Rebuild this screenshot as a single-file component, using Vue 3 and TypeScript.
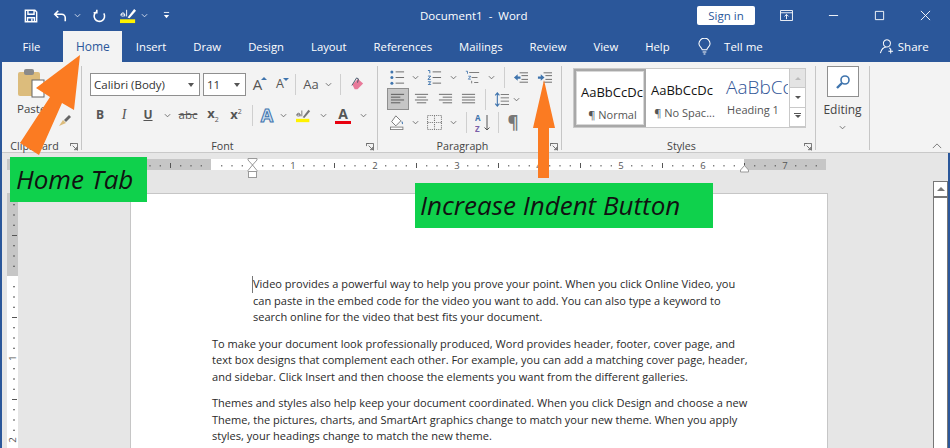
<template>
  <div class="word">
    <header class="title-bar">
      <div class="qat">
        <svg class="qi" viewBox="0 0 16 16"><path d="M1.500 1.500h11l2 2v11h-13zM4.500 2v4h7V2M4 14.500V10h8v4.500M9 11v3" fill="none" stroke="#fff" stroke-width="1.600" /></svg>
        <svg class="qi undo" viewBox="0 0 16 16"><path d="M6 2 2 6l4 4M2.500 6H10a4 4 0 0 1 4 4v4" fill="none" stroke="#fff" stroke-width="1.800" /></svg>
        <svg class="chev-w" viewBox="0 0 8 5"><path d="M1 1l3 3 3-3" fill="none" stroke="#dfe7f3" /></svg>
        <svg class="qi redo" viewBox="0 0 16 16"><path d="M5 3.200A6 6 0 1 0 13.500 5M5.500 .8v3.400H1.800" fill="none" stroke="#fff" stroke-width="1.800" /></svg>
        <svg class="qi high" viewBox="0 0 18 18"><path d="M8 11 15 2l2 2-7 8z" fill="#fff" /><rect y="13" width="16" height="4" fill="#fff200" /><path d="M1 8.500c0-3 4-3 4 0V10M5 8c-1-1-4-.5-4 .7 0 1.300 3 1.300 4 0M7 3v7" fill="none" stroke="#fff" /></svg>
        <svg class="chev-w after-high" viewBox="0 0 8 5"><path d="M1 1l3 3 3-3" fill="none" stroke="#dfe7f3" /></svg>
        <svg class="qi more" viewBox="0 0 8 10"><path d="M1 1.500h6" fill="none" stroke="#fff" /><path d="M1 4.500h6L4 8z" fill="#fff" /></svg>
      </div>
      <div class="doc-title">Document1 &nbsp;-&nbsp; Word</div>
      <button class="sign-in">Sign in</button>
      <div class="win-btns">
        <svg class="win" viewBox="0 0 14 12"><path d="M.5.500h13v11H.500zM.5 3h13M7 10V5M4.800 7 7 4.800 9.200 7" fill="none" stroke="#fff" /></svg>
        <svg class="win" viewBox="0 0 12 12"><path d="M1 6h10" stroke="#fff" fill="none" /></svg>
        <svg class="win" viewBox="0 0 12 12"><path d="M1.500 1.500h9v9h-9z" stroke="#fff" fill="none" /></svg>
        <svg class="win" viewBox="0 0 12 12"><path d="M1 1l10 10M11 1 1 11" stroke="#fff" fill="none" /></svg>
      </div>
    </header>

    <nav class="tabs">
      <span v-for="tab in tabs" :key="tab" class="tab" :class="{ active: tab === 'Home', file: tab === 'File' }">{{ tab }}</span>
      <svg class="bulb" viewBox="0 0 14 18"><path d="M4.500 12.500C4 10 1 9 1 6a6 6 0 0 1 12 0c0 3-3 4-3.500 6.500zM5 15h4M6 17h2" fill="none" stroke="#fff" stroke-width="1.100" /></svg>
      <span class="tell">Tell me</span>
      <svg class="share-icon" viewBox="0 0 16 16"><path d="M8.500 8.500a3.800 3.800 0 1 0-.1 0C5 8.500 2.500 11 1.500 15M11 9.500c.7.500 1 1 1.500 1.700M10 13h5M12.500 10.500v5" fill="none" stroke="#fff" stroke-width="1.100" /></svg>
      <span class="share">Share</span>
    </nav>

    <section class="ribbon">
      <div class="group g-clip">
        <div class="clip-body">
          <svg class="paste" viewBox="0 0 28 30"><rect x="1" y="4" width="22" height="24" rx="2" fill="#dcbc7c" /><rect x="7" y="1" width="10" height="6" rx="2" fill="#8a8a8a" /><rect x="15" y="12" width="12" height="17" fill="#fff" stroke="#666" /></svg>
          <span class="paste-label">Paste</span>
          <svg class="brush" viewBox="0 0 14 14"><path d="M1 13l4-6 3 3z" fill="#dcbc7c" /><path d="M6 7l5-5 2 2-5 5z" fill="#666" /></svg>
        </div>
        <div class="g-label">Clipboard<svg class="launch" viewBox="0 0 9 9"><path d="M.5.500h8v8M.5.500v3M.5.500h3M3 3l4.500 4.500M4.500 7.500h3v-3" fill="none" stroke="#666" /></svg></div>
      </div>

      <div class="group g-font">
        <div class="font-r1">
          <div class="combo">Calibri (Body)<i class="tri" /></div>
          <div class="combo size">11<i class="tri" /></div>
          <span class="cell big-a">A<b class="up" /></span>
          <span class="cell small-a">A<b class="down" /></span>
          <i class="sep" />
          <span class="cell aa">Aa</span>
          <svg class="chev" viewBox="0 0 8 5"><path d="M1 1l3 3 3-3" /></svg>
          <i class="sep" />
          <svg class="ic" viewBox="0 0 16 16"><path d="M5 13 2.500 8l6-6L14 7l-6 6z" fill="#e87a9a" /><path d="M2 9l5-8 2 1-1 4" fill="none" stroke="#456" /></svg>
        </div>
        <div class="font-r2">
          <b class="cell fx">B</b>
          <i class="cell fx it">I</i>
          <u class="cell fx ul">U</u>
          <svg class="chev" viewBox="0 0 8 5"><path d="M1 1l3 3 3-3" /></svg>
          <s class="cell fx abc">abc</s>
          <span class="cell fx sc">x<sub>2</sub></span>
          <span class="cell fx sc">x<sup>2</sup></span>
          <i class="sep" />
          <span class="cell effect">A</span>
          <svg class="chev" viewBox="0 0 8 5"><path d="M1 1l3 3 3-3" /></svg>
          <svg class="ic" viewBox="0 0 18 18"><path d="M8 11 15 2l2 2-7 8z" fill="#777" /><rect y="13" width="16" height="4" fill="#fff200" /><path d="M1 8.500c0-3 4-3 4 0V10M5 8c-1-1-4-.5-4 .7 0 1.300 3 1.300 4 0M7 3v7" fill="none" stroke="#666" /></svg>
          <svg class="chev" viewBox="0 0 8 5"><path d="M1 1l3 3 3-3" /></svg>
          <span class="cell color-a">A</span>
          <svg class="chev" viewBox="0 0 8 5"><path d="M1 1l3 3 3-3" /></svg>
        </div>
        <div class="g-label">Font<svg class="launch" viewBox="0 0 9 9"><path d="M.5.500h8v8M.5.500v3M.5.500h3M3 3l4.500 4.500M4.500 7.500h3v-3" fill="none" stroke="#666" /></svg></div>
      </div>

      <div class="group g-para">
        <div class="para-r1">
          <svg class="ic" viewBox="0 0 16 16"><path d="M6 2h9M6 8h9M6 14h9" stroke="#666" /><circle cx="2" cy="2" r="1.600" fill="#3f74ad" /><circle cx="2" cy="8" r="1.600" fill="#3f74ad" /><circle cx="2" cy="14" r="1.600" fill="#3f74ad" /></svg>
          <svg class="chev" viewBox="0 0 8 5"><path d="M1 1l3 3 3-3" /></svg>
          <svg class="ic" viewBox="0 0 16 16"><path d="M6 2h9M6 8h9M6 14h9" stroke="#666" /><path d="M1 .5h2v3M1 6.500h3L1 10h3M1 12.500h3L2.500 14 4 15.500H1" fill="none" stroke="#3f74ad" /></svg>
          <svg class="chev" viewBox="0 0 8 5"><path d="M1 1l3 3 3-3" /></svg>
          <svg class="ic" viewBox="0 0 18 16"><path d="M5 2h12M8 8h7M11 14h5" stroke="#666" /><path d="M1 .5h2v3M4 6.500h3L4 10h3" fill="none" stroke="#3f74ad" /><path d="M8 12v3" stroke="#666" /></svg>
          <svg class="chev" viewBox="0 0 8 5"><path d="M1 1l3 3 3-3" /></svg>
          <i class="sep" />
          <svg class="ic" viewBox="0 0 16 14"><path d="M7 2h9M9 5h7M9 9h7M7 12h9" stroke="#666" /><path d="M1 7l4-3.500v2.300h3v2.400H5v2.300z" fill="#3f74ad" /></svg>
          <svg class="ic" viewBox="0 0 16 14"><path d="M7 2h9M9 5h7M9 9h7M7 12h9" stroke="#666" /><path d="M8 7 4 3.500v2.300H1v2.400h3v2.300z" fill="#3f74ad" /></svg>
        </div>
        <div class="para-r2">
          <span class="align-on"><svg class="ic" viewBox="0 0 16 14"><path d="M1 1.500h14M1 4.500h10M1 7.500h14M1 10.500h10" stroke="#555" /></svg></span>
          <svg class="ic" viewBox="0 0 16 14"><path d="M1 1.500h14M3 4.500h10M1 7.500h14M3 10.500h10" stroke="#666" /></svg>
          <svg class="ic" viewBox="0 0 16 14"><path d="M1 1.500h14M5 4.500h10M1 7.500h14M5 10.500h10" stroke="#666" /></svg>
          <svg class="ic" viewBox="0 0 16 14"><path d="M1 1.500h14M1 4.500h14M1 7.500h14M1 10.500h14" stroke="#666" /></svg>
          <i class="sep" />
          <svg class="ic" viewBox="0 0 18 18"><path d="M8 3h10M8 7h10M8 11h10M8 15h10" stroke="#666" /><path d="M4 1v16M1.500 4 4 1l2.500 3M1.500 14 4 17l2.500-3" fill="none" stroke="#3f74ad" stroke-width="1.300" /></svg>
          <svg class="chev" viewBox="0 0 8 5"><path d="M1 1l3 3 3-3" /></svg>
        </div>
        <div class="para-r3">
          <svg class="ic" viewBox="0 0 18 18"><path d="M7 1 2 8l5 5 6-6z" fill="#fff" stroke="#666" /><path d="M14 7c2 2 2 4 1 4s-1-2-1-4z" fill="#3f74ad" /><rect x=".5" y="14.500" width="15" height="3" fill="#fff" stroke="#777" /></svg>
          <svg class="chev" viewBox="0 0 8 5"><path d="M1 1l3 3 3-3" /></svg>
          <svg class="ic" viewBox="0 0 14 14"><path d="M.5.500h13v13H.500zM7 .5v13M.5 7h13" fill="none" stroke="#777" stroke-dasharray="1 1" /></svg>
          <svg class="chev" viewBox="0 0 8 5"><path d="M1 1l3 3 3-3" /></svg>
          <i class="sep" />
          <svg class="sort" viewBox="0 0 16 19"><text x="0" y="8" class="az a">A</text><text x="0" y="18.500" class="az z">Z</text><path d="M12 2v15M9.500 14.500 12 17l2.500-2.500" fill="none" stroke="#555" /></svg>
          <i class="sep" />
          <span class="cell pilcrow">¶</span>
        </div>
        <div class="g-label">Paragraph<svg class="launch" viewBox="0 0 9 9"><path d="M.5.500h8v8M.5.500v3M.5.500h3M3 3l4.500 4.500M4.500 7.500h3v-3" fill="none" stroke="#666" /></svg></div>
      </div>

      <div class="group g-styles">
        <div class="gallery">
          <div class="style-card selected"><span class="sample">AaBbCcDc</span><span class="style-name">¶ Normal</span></div>
          <div class="style-card"><span class="sample">AaBbCcDc</span><span class="style-name">¶ No Spac...</span></div>
          <div class="style-card heading"><span class="sample">AaBbCc</span><span class="style-name">Heading 1</span></div>
          <div class="gal-scroll">
            <span class="off"><i class="mini-up" /></span>
            <span><i class="mini-down" /></span>
            <span class="expand"><i class="mini-down" /></span>
          </div>
        </div>
        <div class="g-label">Styles<svg class="launch" viewBox="0 0 9 9"><path d="M.5.500h8v8M.5.500v3M.5.500h3M3 3l4.500 4.500M4.500 7.500h3v-3" fill="none" stroke="#666" /></svg></div>
      </div>

      <div class="group g-edit">
        <div class="find-box">
          <svg class="find" viewBox="0 0 16 16"><circle cx="10" cy="6" r="4" fill="none" stroke="#3f74ad" stroke-width="1.600" /><path d="M7 9l-5 5" stroke="#3f74ad" stroke-width="2.400" /></svg>
        </div>
        <span class="edit-label">Editing</span>
        <svg class="chev" viewBox="0 0 8 5"><path d="M1 1l3 3 3-3" /></svg>
      </div>

      <svg class="collapse" viewBox="0 0 12 7"><path d="M1 6l5-5 5 5" fill="none" stroke="#666" /></svg>
    </section>

    <section class="workspace">
      <div class="doc-col">
        <svg class="h-ruler" viewBox="0 153 830 40">
          <rect x="7" y="159" width="204" height="11" fill="#c6c6c6" />
          <rect x="211" y="159" width="533" height="11" fill="#fff" />
          <rect x="744" y="159" width="82" height="11" fill="#c6c6c6" />
          <template v-for="t in hTicks" :key="t.x">
            <text v-if="t.label" :x="t.x" y="169" class="rule-num">{{ t.label }}</text>
            <rect v-else :x="t.x" :y="t.long ? 163 : 165" width="1" :height="t.long ? 5 : 1.500" fill="#555" />
          </template>
          <path d="M248 158.500h9v1.500l-4.500 5 4.500 5.500v1h-9v-1l4.500-5.500-4.500-5z" fill="#fff" stroke="#999" />
          <rect x="248.500" y="171.500" width="8" height="6" fill="#fff" stroke="#999" />
          <path d="M744.500 165.500l4 4.500v2h-8v-2z" fill="#fff" stroke="#999" />
        </svg>
        <div class="doc-body">
          <svg class="v-ruler" viewBox="0 193 20 255">
            <rect x="7" y="193" width="11" height="83" fill="#c6c6c6" />
            <rect x="7" y="276" width="11" height="172" fill="#fff" />
            <template v-for="t in vTicks" :key="t.y">
              <text v-if="t.label" x="13" :y="t.y" class="rule-num" :transform="`rotate(-90 13 ${t.y})`" dy="3">{{ t.label }}</text>
              <rect v-else :x="t.long ? 12 : 13" :y="t.y" :width="t.long ? 5 : 2" height="1" fill="#555" />
            </template>
          </svg>
          <article class="page">
            <p v-for="(para, i) in paragraphs" :key="i" class="para" :class="{ first: i === 0 }">
              <span v-for="line in para" :key="line" class="line">{{ line }}</span>
            </p>
          </article>
        </div>
      </div>
      <div class="v-scroll">
        <div class="scroll-up"><i class="scroll-tri" /></div>
      </div>
    </section>

    <div class="callout home-callout">Home Tab</div>
    <div class="callout indent-callout">Increase Indent Button</div>
    <svg class="arrows" viewBox="0 0 950 448">
      <path d="M80 55 36 88l14 9-30 46 19 12 23-52 12 7z" fill="#fb7b22" />
      <path d="M544 80l11 48h-6v50h-11v-50h-5z" fill="#fb7b22" />
    </svg>
  </div>
</template>

<script setup lang="ts">
const tabs = ["File", "Home", "Insert", "Draw", "Design", "Layout", "References", "Mailings", "Review", "View", "Help"];

const paragraphs = [
  [
    "Video provides a powerful way to help you prove your point. When you click Online Video, you",
    "can paste in the embed code for the video you want to add. You can also type a keyword to",
    "search online for the video that best fits your document.",
  ],
  [
    "To make your document look professionally produced, Word provides header, footer, cover page, and",
    "text box designs that complement each other. For example, you can add a matching cover page, header,",
    "and sidebar. Click Insert and then choose the elements you want from the different galleries.",
  ],
  [
    "Themes and styles also help keep your document coordinated. When you click Design and choose a new",
    "Theme, the pictures, charts, and SmartArt graphics change to match your new theme. When you apply",
    "styles, your headings change to match the new theme.",
  ],
];

interface HTick {
  x: number;
  long: boolean;
  label: string;
}

interface VTick {
  y: number;
  long: boolean;
  label: string;
}

// one inch is 82px, the ruler has a mark every 1/8 inch
const hTicks: HTick[] = [];
for (let k = -6; k <= 59; k++) {
  if (k === 0) continue;
  hTicks.push({
    x: 211 + k * 10.25,
    long: Math.abs(k) % 8 === 4,
    label: k % 8 === 0 ? String(k / 8) : "",
  });
}

const vTicks: VTick[] = [];
for (let k = -8; k <= 16; k++) {
  if (k === 0) continue;
  vTicks.push({
    y: 276 + k * 10.25,
    long: Math.abs(k) % 8 === 4,
    label: k > 0 && k % 8 === 0 ? String(k / 8) : "",
  });
}
</script>

<style>
html,
body {
  margin: 0;
  overflow: hidden;
}
</style>

<style scoped>
.word {
  position: relative;
  width: 950px;
  height: 448px;
  overflow: hidden;
  display: flex;
  flex-direction: column;
  background: #2b579a;
  font-family: "Open Sans", "Noto Sans", sans-serif;
  color: #444;
}

.title-bar {
  display: flex;
  align-items: center;
  height: 31px;
  flex: none;
  color: #fff;
}

.qat {
  display: flex;
  align-items: center;
  width: 420px;
  padding-left: 24px;
  box-sizing: border-box;
  height: 31px;
}

.qi {
  width: 14px;
  height: 14px;
  flex: none;
}

.undo {
  margin-left: 15px;
}

.chev-w {
  width: 7px;
  height: 5px;
  margin-left: 7px;
  flex: none;
}

.redo {
  margin-left: 11px;
}

.high {
  width: 17px;
  height: 17px;
  margin-left: 14px;
}

.after-high {
  margin-left: 4px;
}

.more {
  width: 7px;
  height: 9px;
  margin-left: 15px;
}

.doc-title {
  width: 277px;
  font-size: 11.500px;
  white-space: nowrap;
}

.sign-in {
  width: 58px;
  height: 19px;
  border: none;
  border-radius: 2px;
  padding: 0;
  background: #fff;
  color: #2b579a;
  font: 11.500px "Open Sans", sans-serif;
}

.win-btns {
  display: flex;
  align-items: center;
  margin-left: 25px;
  gap: 35px;
}

.win {
  width: 11px;
  height: 11px;
  flex: none;
}

.win:first-child {
  width: 13px;
}

.tabs {
  display: flex;
  align-items: center;
  height: 31px;
  flex: none;
  padding-left: 9px;
  color: #fff;
  font-size: 11.300px;
}

.tab {
  height: 31px;
  line-height: 31px;
  padding: 0 13.500px;
  white-space: nowrap;
}

.tab.file {
  margin-right: 10px;
  padding-right: 13px;
}

.tab.active {
  background: #f3f3f3;
  color: #2b579a;
  font-size: 12px;
  padding: 0 12.500px;
}

.bulb {
  width: 13px;
  height: 17px;
  margin-left: 15px;
  flex: none;
}

.tell {
  margin-left: 13px;
  font-size: 11.500px;
}

.share-icon {
  width: 15px;
  height: 15px;
  margin-left: 116px;
  flex: none;
}

.share {
  margin-left: 4px;
  font-size: 11.500px;
}

.ribbon {
  position: relative;
  display: flex;
  height: 91px;
  flex: none;
  margin: 0 0 0 2px;
  width: 948px;
  background: #f3f3f3;
  border-bottom: 1px solid #c9c9c9;
  box-sizing: border-box;
  font-size: 10.700px;
}

.group {
  position: relative;
  display: flex;
  flex-direction: column;
  box-sizing: border-box;
  margin: 4px 0 2px;
  border-right: 1px solid #c6c6c6;
  flex: none;
}

.g-label {
  position: absolute;
  left: 0;
  right: 0;
  bottom: -4px;
  height: 15px;
  box-sizing: border-box;
  padding-right: 14px;
  line-height: 15px;
  text-align: center;
  white-space: nowrap;
}

.launch {
  position: absolute;
  right: 3px;
  bottom: 3px;
  width: 8px;
  height: 8px;
}

.g-clip {
  width: 80px;
}

.clip-body {
  display: flex;
  flex-direction: column;
  align-items: flex-start;
  padding: 2px 0 0 15px;
}

.paste {
  width: 28px;
  height: 30px;
}

.paste-label {
  margin-top: 3px;
  font-size: 11.500px;
}

.brush {
  position: absolute;
  left: 56px;
  top: 47px;
  width: 14px;
  height: 14px;
}

.g-font {
  width: 296px;
}

.font-r1 {
  display: grid;
  grid-template-columns: 110px 46px 23px 22px 8px 24px 10px 14px 20px;
  column-gap: 0;
  align-items: center;
  height: 23px;
  margin: 7px 0 0 8px;
  justify-items: center;
}

.font-r2 {
  display: grid;
  grid-template-columns: 24px 24px 24px 14px 28px 22px 24px 8px 22px 10px 30px 10px 30px 10px;
  align-items: center;
  justify-items: center;
  height: 24px;
  margin: 7px 0 0 6px;
}

.combo {
  position: relative;
  box-sizing: border-box;
  width: 110px;
  height: 23px;
  line-height: 21px;
  padding-left: 3px;
  border: 1px solid #8f8f8f;
  background: #fff;
  font-size: 11.500px;
  color: #333;
  white-space: nowrap;
}

.combo.size {
  width: 43px;
  margin-left: 3px;
  justify-self: start;
}

.tri {
  position: absolute;
  right: 5px;
  top: 9px;
  border: 3.500px solid transparent;
  border-top: 4px solid #555;
  border-bottom: 0;
}

.cell {
  text-align: center;
  font-style: normal;
  line-height: 1;
}

.big-a,
.small-a {
  position: relative;
  font-size: 15px;
  color: #555;
}

.small-a {
  font-size: 12.500px;
}

.up,
.down {
  position: absolute;
  right: -5px;
  top: 0;
  border: 3px solid transparent;
  border-top: 0;
  border-bottom: 3px solid #3f74ad;
}

.down {
  border-top: 3px solid #3f74ad;
  border-bottom: 0;
}

.aa {
  font-size: 13px;
  color: #555;
}

.sep {
  display: block;
  width: 1px;
  height: 21px;
  background: #cfcfcf;
}

.chev {
  width: 7px;
  height: 5px;
  flex: none;
  fill: none;
  stroke: #666;
}

.ic {
  width: 15px;
  height: 15px;
  flex: none;
}

.sort {
  width: 16px;
  height: 19px;
  flex: none;
}

.fx {
  font-size: 12px;
  color: #555;
}

.fx.it {
  font-family: "Liberation Serif", serif;
  font-style: italic;
  font-size: 14px;
}

.fx.ul {
  font-weight: 700;
}

.fx.abc {
  font-size: 11.500px;
}

.fx.sc {
  font-weight: 700;
  font-size: 13px;
}

.fx.sc sub,
.fx.sc sup {
  font-size: 7px;
  font-weight: 400;
}

.effect {
  font-size: 18px;
  font-weight: 700;
  color: #cfe0f2;
  -webkit-text-stroke: 1px #3f74ad;
}

.color-a {
  font-size: 14px;
  font-weight: 700;
  color: #555;
  border-bottom: 3px solid #e8000f;
  width: 16px;
}

.g-para {
  width: 184px;
}

.para-r1 {
  display: grid;
  grid-template-columns: 26px 10px 28px 10px 28px 10px 16px 16px 32px;
  align-items: center;
  justify-items: center;
  height: 16px;
  margin: 1px 0 0 6px;
}

.para-r2 {
  display: grid;
  grid-template-columns: 23px 24px 24px 22px 12px 20px 10px;
  align-items: center;
  justify-items: center;
  height: 22px;
  margin: 5px 0 0 8px;
}

.align-on {
  display: flex;
  align-items: center;
  justify-content: center;
  box-sizing: border-box;
  width: 22px;
  height: 22px;
  background: #c6c6c6;
  border: 1px solid #8f8f8f;
}

.para-r3 {
  display: grid;
  grid-template-columns: 26px 10px 28px 10px 16px 18px 12px 18px;
  align-items: center;
  justify-items: center;
  height: 18px;
  margin: 2px 0 0 6px;
}

.az {
  font-size: 8px;
  font-weight: 700;
}

.az.a {
  fill: #3f74ad;
}

.az.z {
  fill: #7a5fa8;
}

.pilcrow {
  font-size: 17px;
  font-weight: 700;
  color: #777;
}

.g-styles {
  width: 254px;
}

.gallery {
  display: flex;
  align-self: flex-start;
  box-sizing: border-box;
  width: 233px;
  height: 60px;
  margin: 2px 0 0 11px;
  background: #fff;
  border: 1px solid #c9c9c9;
}

.style-card {
  box-sizing: border-box;
  width: 72px;
  padding: 9px 0 0 5px;
  display: flex;
  flex-direction: column;
  overflow: hidden;
  white-space: nowrap;
}

.style-card.selected {
  width: 72px;
  border: 2px solid #a8a8a8;
  outline: 1px solid #d8d8d8;
  outline-offset: -3px;
  padding-left: 5px;
}

.style-card.heading {
  width: 70px;
  padding: 3px 0 0 8px;
}

.sample {
  height: 24px;
  line-height: 24px;
  font-size: 13px;
  color: #111;
}

.heading .sample {
  height: 30px;
  line-height: 30px;
  font-size: 19px;
  font-weight: 300;
  color: #2f5496;
}

.style-name {
  margin-top: 3px;
  text-align: center;
  font-size: 11px;
  color: #555;
}

.heading .style-name {
  margin: 0 8px 0 0;
}

.gal-scroll {
  display: flex;
  flex-direction: column;
  width: 15px;
  flex: none;
  border-left: 1px solid #c9c9c9;
  margin-left: auto;
}

.gal-scroll span {
  position: relative;
  display: flex;
  flex: 1;
  align-items: center;
  justify-content: center;
  border-bottom: 1px solid #c9c9c9;
}

.gal-scroll .off {
  background: #e4e4e4;
}

.mini-up,
.mini-down {
  border: 3px solid transparent;
  border-top: 0;
  border-bottom: 3px solid #bbb;
}

.mini-down {
  border-top: 3px solid #555;
  border-bottom: 0;
}

.expand::before {
  content: "";
  position: absolute;
  top: 5px;
  width: 7px;
  height: 1px;
  background: #555;
}

.g-edit {
  width: 54px;
  align-items: center;
  margin-top: 4px;
}

.find-box {
  display: flex;
  align-items: center;
  justify-content: center;
  box-sizing: border-box;
  width: 32px;
  height: 31px;
  background: #fff;
  border: 1px solid #8f8f8f;
}

.find {
  width: 16px;
  height: 16px;
}

.edit-label {
  margin-top: 4px;
  font-size: 12px;
}

.g-edit .chev {
  margin-top: 7px;
}

.collapse {
  position: absolute;
  right: 8px;
  bottom: 3px;
  width: 10px;
  height: 6px;
}

.workspace {
  display: flex;
  flex: 1;
  margin-left: 2px;
  margin-right: 2px;
  background: #e6e6e6;
  min-height: 0;
}

.doc-col {
  flex: 1;
  display: flex;
  flex-direction: column;
  min-width: 0;
  margin-left: -2px;
}

.h-ruler {
  display: block;
  width: 830px;
  height: 40px;
  flex: none;
}

.doc-body {
  display: flex;
  flex: 1;
  min-height: 0;
}

.v-ruler {
  display: block;
  width: 20px;
  height: 255px;
  flex: none;
}

.rule-num {
  font-size: 9.500px;
  text-anchor: middle;
  fill: #555;
}

.page {
  box-sizing: border-box;
  width: 698px;
  height: 300px;
  margin-left: 110px;
  padding: 82px 0 0 81px;
  background: #fff;
  border: 1px solid #c6c6c6;
  border-bottom: 0;
  font-size: 11.050px;
  color: #2a2a2a;
}

.para {
  margin: 0 0 10px;
  line-height: 16.500px;
}

.para.first {
  padding-left: 41px;
}

.para.first .line:first-child {
  margin-left: -1px;
  border-left: 1px solid #777;
}

.line {
  display: block;
  white-space: nowrap;
}

.v-scroll {
  width: 15px;
  margin: 28px 0 0 0;
  flex: none;
  box-sizing: border-box;
  border: 1px solid #777;
  border-bottom: 0;
  background: #fff;
}

.scroll-up {
  display: flex;
  align-items: center;
  justify-content: center;
  height: 14px;
  border-bottom: 2px solid #777;
}

.scroll-tri {
  border: 4px solid transparent;
  border-top: 0;
  border-bottom: 4px solid #777;
}

.callout {
  position: absolute;
  box-sizing: border-box;
  background: #0fd14c;
  color: #111;
  font-style: italic;
  font-size: 26px;
  line-height: 45px;
  white-space: nowrap;
}

.home-callout {
  left: 10px;
  top: 157px;
  width: 137px;
  height: 45px;
  padding-left: 6px;
}

.indent-callout {
  left: 415px;
  top: 183px;
  width: 298px;
  height: 45px;
  padding-left: 5px;
}

.arrows {
  position: absolute;
  left: 0;
  top: 0;
  width: 950px;
  height: 448px;
  pointer-events: none;
}
</style>
